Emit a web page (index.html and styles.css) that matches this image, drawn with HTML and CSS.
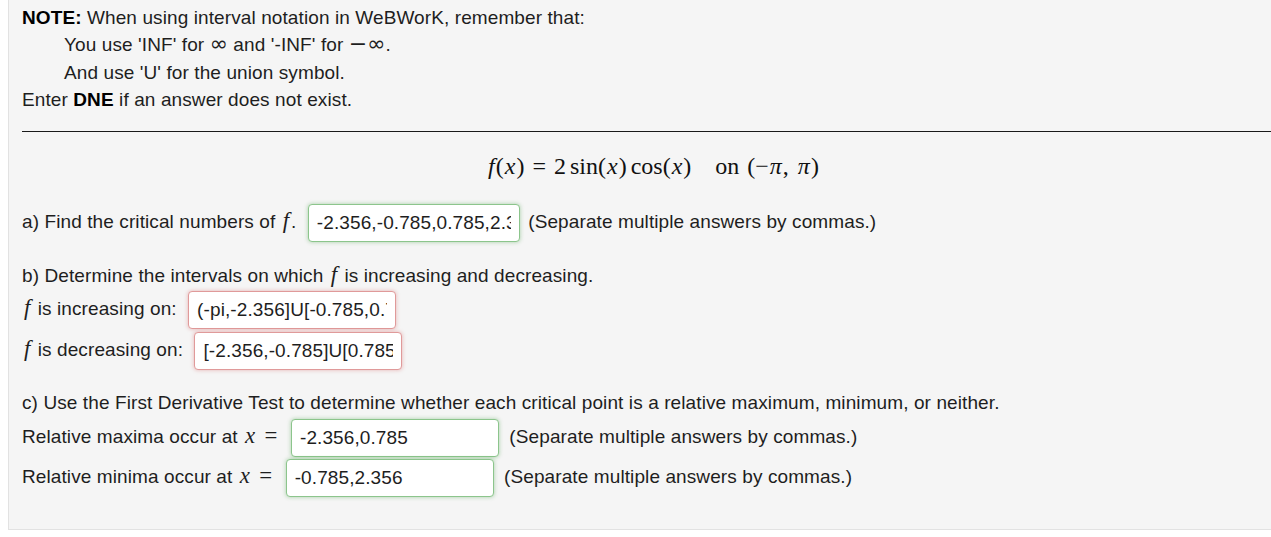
FILE: index.html
```html
<!DOCTYPE html>
<html>
<head>
<meta charset="utf-8">
<link rel="stylesheet" href="styles.css">
</head>
<body>
<div class="panel">
  <div class="note">
    <div><b>NOTE:</b> When using interval notation in WeBWorK, remember that:</div>
    <div class="indent">You use 'INF' for <span class="m">∞</span> and '-INF' for <span class="m">−∞</span>.</div>
    <div class="indent">And use 'U' for the union symbol.</div>
    <div>Enter <b>DNE</b> if an answer does not exist.</div>
  </div>
  <hr class="rule">
  <div class="formula"><span class="mi">f</span>(<span class="mi">x</span>) = 2<span class="fn">sin</span>(<span class="mi">x</span>)<span class="fn">cos</span>(<span class="mi">x</span>)<span class="quad"></span>on (−<span class="mi">π</span>, <span class="mi">π</span>)</div>

  <div class="row first">a) Find the critical numbers of <span class="mi">f</span>. <input class="ans good wide" type="text" value="-2.356,-0.785,0.785,2.356" readonly> <span class="hint">(Separate multiple answers by commas.)</span></div>

  <div class="head">b) Determine the intervals on which <span class="mi">f</span> is increasing and decreasing.</div>
  <div class="row"><span class="mi">f</span> is increasing on: <input class="ans bad" type="text" value="(-pi,-2.356]U[-0.785,0.785]U[2.356,pi)" readonly></div>
  <div class="row gap1"><span class="mi">f</span> is decreasing on: <input class="ans bad" type="text" value="[-2.356,-0.785]U[0.785,2.356]" readonly></div>

  <div class="head">c) Use the First Derivative Test to determine whether each critical point is a relative maximum, minimum, or neither.</div>
  <div class="row">Relative maxima occur at <span class="mi">x</span> <span class="eq">=</span> <input class="ans good" type="text" value="-2.356,0.785" readonly> <span class="hint wide">(Separate multiple answers by commas.)</span></div>
  <div class="row">Relative minima occur at <span class="mi">x</span> <span class="eq">=</span> <input class="ans good" type="text" value="-0.785,2.356" readonly> <span class="hint wide">(Separate multiple answers by commas.)</span></div>
</div>
</body>
</html>
```

FILE: styles.css
```css
html, body {
  margin: 0;
  padding: 0;
  overflow: hidden;
  background: #ffffff;
}
body {
  font-family: "Liberation Sans", Arial, sans-serif;
  font-size: 19px;
  letter-spacing: 0.1px;
  color: #1e1e1e;
  width: 1271px;
  height: 537px;
}
.panel {
  margin-left: 8px;
  width: 1262px;
  background: #f5f5f5;
  border-left: 1px solid #e2e2e2;
  border-bottom: 1px solid #e2e2e2;
  padding: 4px 13px 33px 13px;
}
.note {
  line-height: 27.3px;
}
.note b {
  font-weight: bold;
  color: #000;
}
.indent {
  padding-left: 42px;
}
.m {
  font-family: "DejaVu Sans", "Liberation Serif", serif;
  font-size: 22px;
  line-height: 10px;
  letter-spacing: 0;
}
.rule {
  border: 0;
  border-top: 1px solid #1a1a1a;
  margin: 18px 0 0 0;
  height: 0;
}
.formula {
  margin-top: 19px;
  height: 30px;
  line-height: 30px;
  text-align: center;
  font-family: "Liberation Serif", "DejaVu Serif", serif;
  font-size: 24px;
  letter-spacing: 0;
  word-spacing: 2px;
  color: #111;
}
.mi {
  font-family: "Liberation Serif", "DejaVu Serif", serif;
  font-style: italic;
  font-size: 1.2em;
  letter-spacing: 0;
  padding: 0 2px;
}
.formula .mi {
  font-size: 1em;
  padding: 0 1px;
}
.fn {
  margin-left: 4px;
}
.quad {
  display: inline-block;
  width: 24px;
}
.eq {
  font-family: "Liberation Serif", "DejaVu Serif", serif;
  font-size: 1.2em;
  margin-left: 2px;
  margin-right: 2px;
}
.row {
  height: 40px;
  line-height: 40px;
  white-space: nowrap;
}
.row.first {
  margin-top: 20px;
}
.row.gap1 {
  margin-top: 1px;
}
.head {
  margin-top: 20px;
  line-height: 27px;
  height: 27px;
}
.ans {
  box-sizing: border-box;
  width: 208px;
  height: 38px;
  vertical-align: middle;
  margin: 0 3px 0 6px;
  padding: 0 8px;
  font-family: "Liberation Sans", Arial, sans-serif;
  font-size: 19px;
  letter-spacing: 0.1px;
  color: #1e1e1e;
  background: #ffffff;
  border-radius: 4px;
  border: 1px solid #bbb;
  outline: none;
}
.ans.wide {
  width: 212px;
}
.ans.good {
  border-color: #8cc58c;
  box-shadow: 0 0 4px rgba(70, 160, 70, 0.45);
}
.ans.bad {
  border-color: #e09a9a;
  box-shadow: 0 0 4px rgba(210, 80, 80, 0.4);
}
.hint {
  margin-left: 0;
}
.hint.wide {
  margin-left: 2px;
}
```
